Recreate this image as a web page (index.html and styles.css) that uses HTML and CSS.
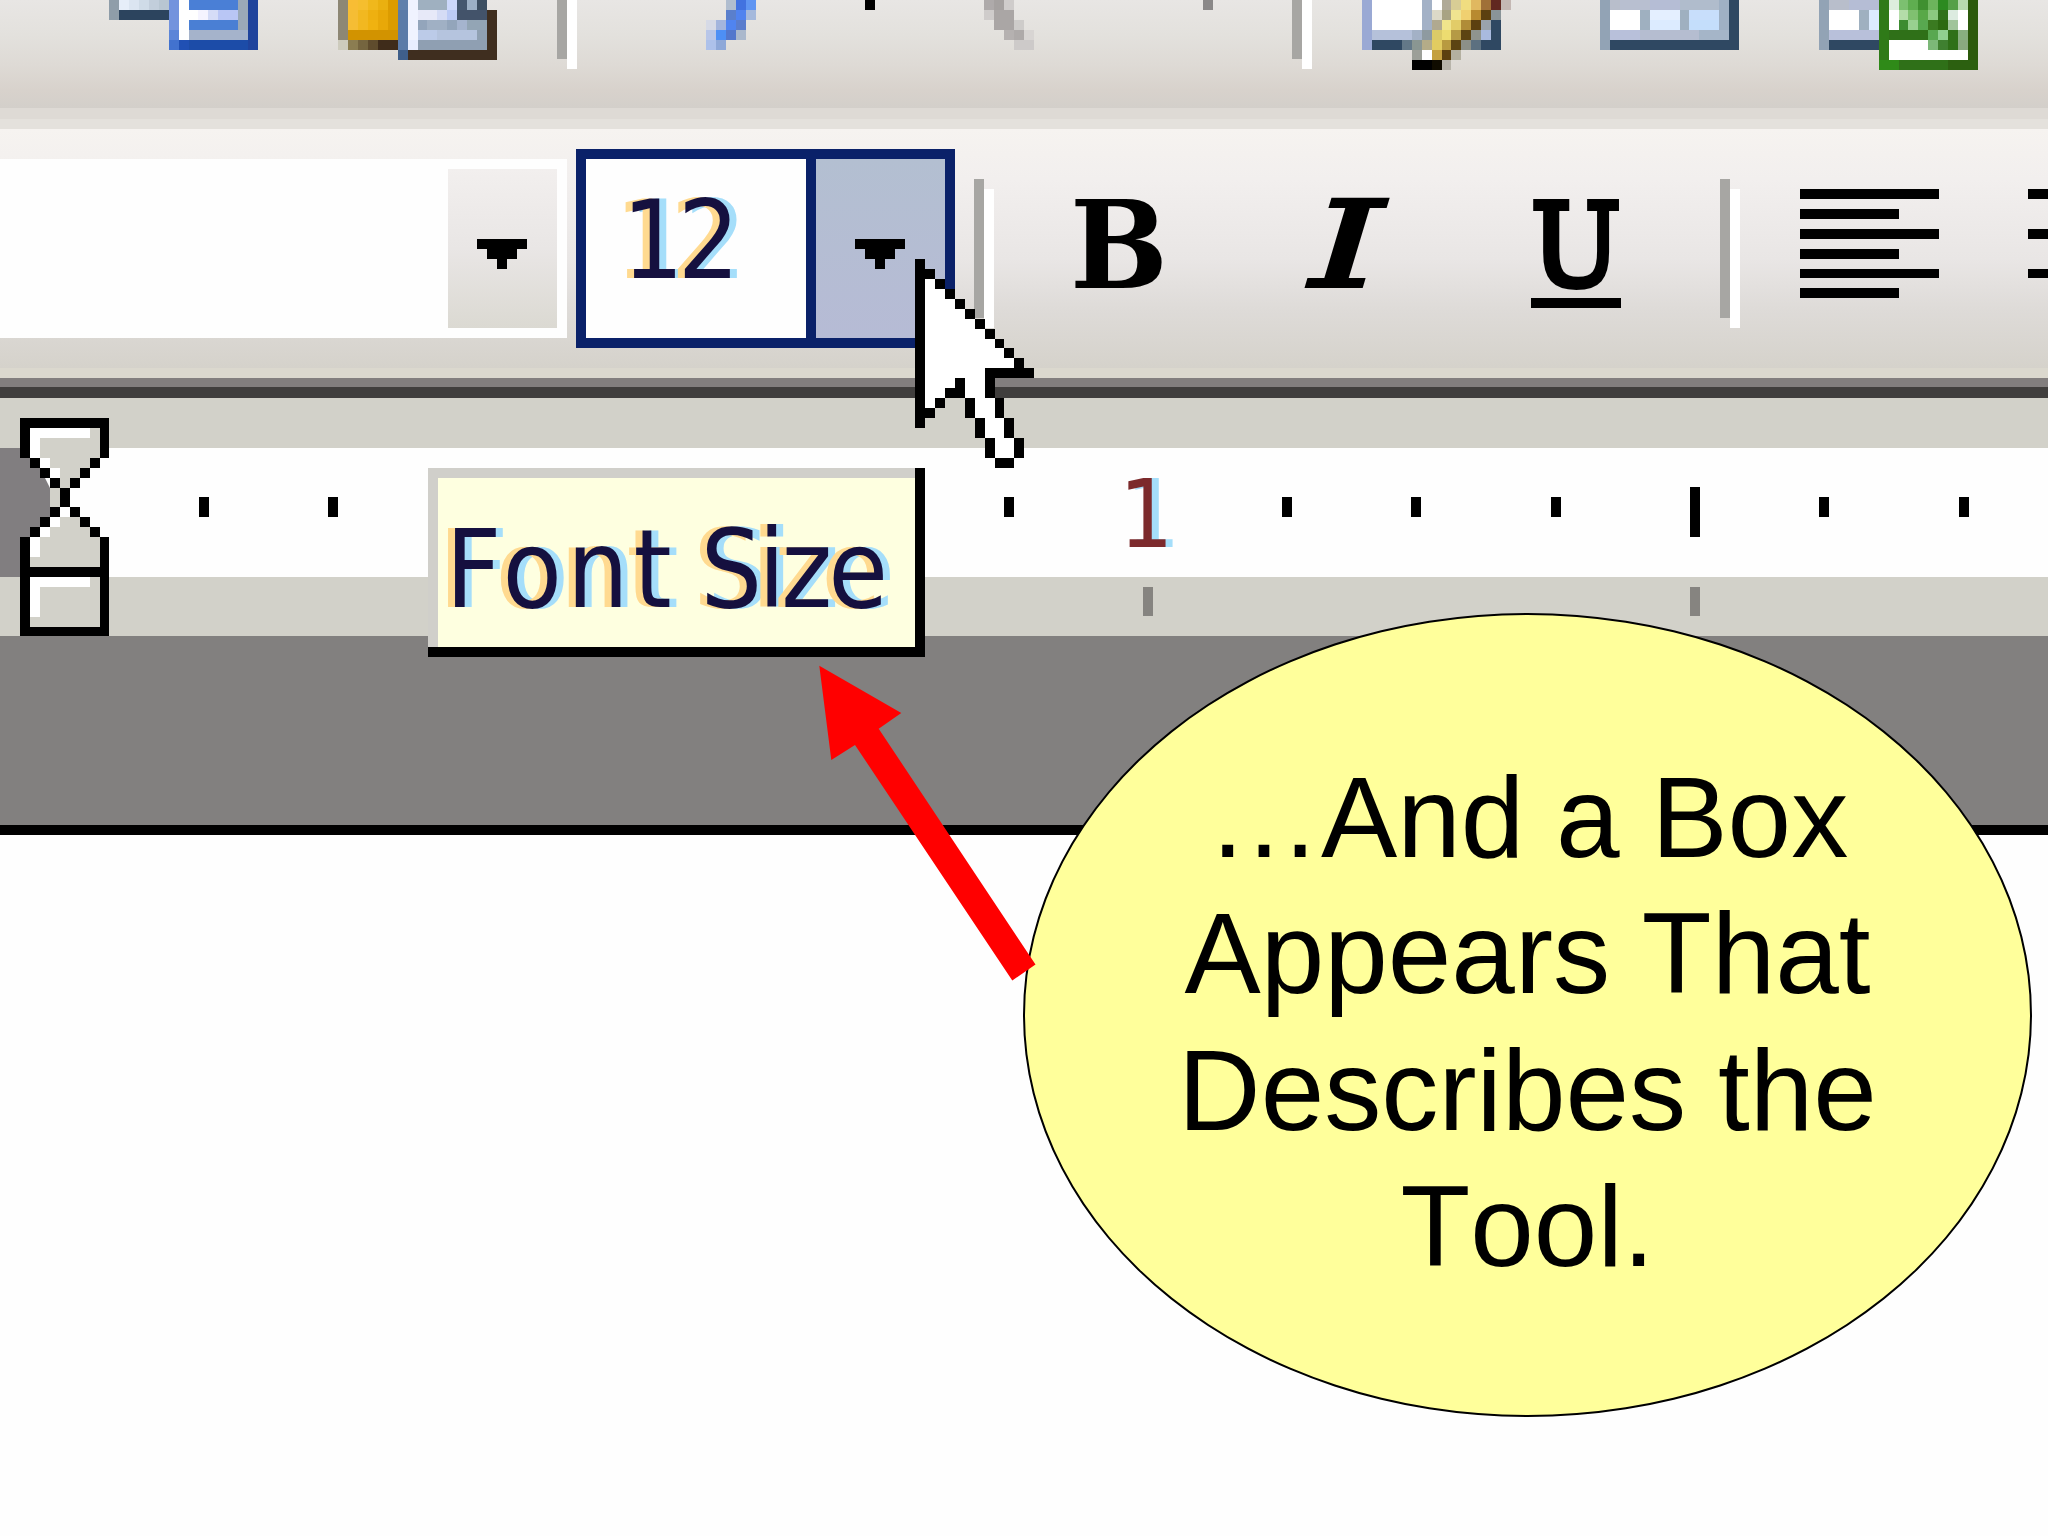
FILE: index.html
```html
<!DOCTYPE html>
<html lang="en">
<head>
    <meta charset="UTF-8">
    <title>Font Size Tool</title>
    <link rel="stylesheet" href="styles.css">
</head>
<body>
    <div class="screen">
        <div class="toolbar standard">
            <svg class="icon copy" data-icon="copy"></svg>
            <svg class="icon paste" data-icon="paste"></svg>
            <div class="separator sep-a"></div>
            <svg class="icon undo" data-icon="undo"></svg>
            <div class="dot dot-undo"></div>
            <svg class="icon redo" data-icon="redo"></svg>
            <div class="dot dot-redo"></div>
            <div class="separator sep-b"></div>
            <svg class="icon draw" data-icon="draw"></svg>
            <svg class="icon table" data-icon="table"></svg>
            <svg class="icon excel" data-icon="excel"></svg>
        </div>

        <div class="toolbar formatting">
            <div class="font-combo">
                <div class="drop"><svg data-icon="down"></svg></div>
            </div>
            <div class="size-combo">
                <div class="size-value"><span class="label">12</span></div>
                <div class="size-drop"><svg data-icon="down"></svg></div>
            </div>
            <div class="separator sep-c"></div>
            <svg class="style-btn bold" width="110" height="150"><text x="6" y="99" textLength="98" lengthAdjust="spacingAndGlyphs">B</text></svg>
            <svg class="style-btn italic" width="110" height="150"><text x="19" y="97" textLength="72" lengthAdjust="spacingAndGlyphs">I</text></svg>
            <svg class="style-btn underline" width="110" height="150">
                <text x="10" y="96" textLength="90" lengthAdjust="spacingAndGlyphs">U</text>
                <rect x="10" y="109" width="90" height="10"/>
            </svg>
            <div class="separator sep-d"></div>
            <svg class="align" data-icon="left"></svg>
            <svg class="center" data-icon="center"></svg>
        </div>

        <div class="ruler">
            <div class="margin-area"></div>
            <svg class="scale" width="2048" height="129">
                <path d="M199 49h10v20h-10zM328 49h10v20h-10zM1004 49h10v20h-10zM1282 49h10v20h-10zM1411 49h10v20h-10zM1551 49h10v20h-10zM1690 39h10v50h-10zM1819 49h10v20h-10zM1959 49h10v20h-10z"/>
            </svg>
            <span class="number">1</span>
        </div>
        <div class="tab-strip">
            <div class="tab-mark first"></div>
            <div class="tab-mark second"></div>
        </div>
        <div class="desk"></div>
        <div class="page"></div>

        <svg class="indent" data-icon="indent"></svg>
        <div class="tooltip"><span class="label"><span class="wide">Font</span> <span class="tight">Size</span></span></div>
        <svg class="cursor" data-icon="cursor"></svg>

        <div class="callout">
            <p>…And a Box<br>Appears That<br>Describes the<br>Tool.</p>
        </div>
        <svg class="arrow" width="220" height="320">
            <polygon points="2.3,2.7 84.3,50 61.7,65.7 218.5,301.5 195.3,317.5 38,82 14.3,97"/>
        </svg>
    </div>

    <script src="icons.js"></script>
</body>
</html>
```
FILE: styles.css
```css
* {
    margin: 0;
    padding: 0;
    box-sizing: border-box;
}

body {
    background: #fefefe;
    font-family: "Liberation Sans", Arial, sans-serif;
}

svg {
    display: block;
    flex: none;
}

.screen {
    position: relative;
    width: 2048px;
    height: 1536px;
    overflow: hidden;
}

.toolbar {
    display: flex;
    align-items: flex-start;
    overflow: hidden;
}

.standard {
    height: 129px;
    background: linear-gradient(#e8e6e4 0, #e3e1dd 35px, #dedad5 65px, #d8d2cc 90px, #d3cfca 108px, #dedad5 108px, #dedad5 119px, #e4e1dc 119px);
}

.formatting {
    height: 249px;
    background: linear-gradient(#f6f3f0 0, #f2efee 50px, #e9e6e5 130px, #dedbd8 180px, #d5d2cb 239px, #dbd8ce 239px);
}

/* standard toolbar spacing */
.copy { margin-left: 109px; }
.paste { margin-left: 80px; }
.sep-a { margin-left: 60px; }
.undo { margin-left: 129px; }
.dot-undo { margin-left: 109px; background: #000; }
.redo { margin-left: 109px; }
.dot-redo { margin-left: 169px; background: #8a8888; }
.sep-b { margin-left: 79px; }
.draw { margin-left: 50.5px; }
.table { margin-left: 89px; }
.excel { margin-left: 79.5px; }

.dot {
    flex: none;
    width: 10px;
    height: 10px;
}

.separator {
    flex: none;
    width: 20px;
    height: 149px;
    background: linear-gradient(#a7a6a3, #a7a6a3) 0 0 / 10px 139px no-repeat,
                linear-gradient(#fff, #fff) 10px 10px / 10px 139px no-repeat;
}

.standard .separator {
    margin-top: -80px;
}

.formatting .separator {
    margin-top: 50px;
}

/* combo boxes */
.font-combo {
    flex: none;
    display: flex;
    justify-content: flex-end;
    width: 567px;
    height: 179px;
    margin-top: 30px;
    padding: 10px;
    background: #fefefe;
}

.drop {
    width: 109px;
    height: 159px;
    padding: 70px 0 0 29px;
    background: linear-gradient(#f2efee, #e9e6e5 50%, #dbd9d2);
}

.size-combo {
    flex: none;
    display: flex;
    width: 379px;
    height: 199px;
    margin: 20px 0 0 9px;
    border: 10px solid #0a2169;
}

.size-value {
    width: 230px;
    padding: 28px 0 0 36px;
    background: #fefefe;
    border-right: 10px solid #0a2169;
}

.size-drop {
    flex: 1;
    padding: 80px 0 0 39px;
    background: linear-gradient(#b3bfd1, #b6bbd5);
}

.label {
    display: block;
    font-family: "DejaVu Sans Condensed", "DejaVu Sans", sans-serif;
    font-stretch: condensed;
    font-size: 108px;
    line-height: 108px;
    white-space: nowrap;
    color: #15103f;
    text-shadow: -7px 0 0 #ffda90, 7px 0 0 #a5defa;
}

.size-value .label {
    letter-spacing: -6px;
}

.tooltip .label {
    word-spacing: -7px;
}

.wide {
    letter-spacing: 5px;
}

.tight {
    letter-spacing: -4px;
}

.sep-c { margin-left: 19px; }
.sep-d { margin-left: 89px; }

.style-btn {
    margin-top: 60px;
    overflow: visible;
    font-family: "DejaVu Serif", "Liberation Serif", serif;
    font-size: 114px;
    stroke: #000;
    stroke-width: 6px;
}

.style-btn rect {
    stroke: none;
}

.bold {
    margin-left: 70px;
    font-size: 122px;
    font-weight: bold;
    stroke: none;
}

.italic {
    margin-left: 118px;
    font-size: 117px;
    font-style: italic;
    stroke-width: 4px;
}

.underline { margin-left: 119px; }

.align { margin: 60px 0 0 60px; }
.center { margin: 60px 0 0 89px; }

/* ruler */
.ruler {
    position: relative;
    height: 199px;
    border-top: 9px solid #827e7e;
    background: linear-gradient(#403e3d 11px, #d2d1c9 11px, #d2d1c9 61px, #fefefe 61px);
}

.margin-area {
    position: absolute;
    left: 0;
    bottom: 0;
    width: 50px;
    height: 129px;
    background: #817e80;
    clip-path: polygon(0 0, 30px 0, 50px 40px, 50px 70px, 30px 90px, 30px 129px, 0 129px);
}

.scale {
    position: absolute;
    left: 0;
    bottom: 0;
}

.number {
    position: absolute;
    left: 1119px;
    top: 80px;
    font-family: "DejaVu Sans Condensed", "DejaVu Sans", sans-serif;
    font-stretch: condensed;
    font-size: 95px;
    line-height: 95px;
    color: #7c2a2c;
    text-shadow: 7px 0 0 #a5defa;
}

.tab-strip {
    display: flex;
    height: 59px;
    padding-top: 10px;
    background: #d2d1c9;
}

.tab-mark {
    width: 10px;
    height: 29px;
    background: #868480;
}

.first { margin-left: 1143px; }
.second { margin-left: 537px; }

.desk {
    height: 199px;
    background: #82807f;
    border-bottom: 10px solid #000;
}

.page {
    height: 701px;
    background: #fefefe;
}

/* floating pieces */
.indent {
    position: absolute;
    left: 20px;
    top: 417.5px;
}

.tooltip {
    position: absolute;
    left: 427.5px;
    top: 467.5px;
    width: 497px;
    height: 189px;
    padding: 48px 0 0 18px;
    background: #feffe0;
    box-shadow: inset -10px -10px 0 #000, inset 10px 10px 0 #d0cfca;
}

.cursor {
    position: absolute;
    left: 915px;
    top: 259px;
}

.callout {
    position: absolute;
    left: 1023px;
    top: 613px;
    width: 1009px;
    height: 804px;
    padding-top: 135px;
    border: 2px solid #000;
    border-radius: 50%;
    background: #ffff9b;
    text-align: center;
    font-size: 114.3px;
    line-height: 136.4px;
    font-kerning: none;
}

.arrow {
    position: absolute;
    left: 817px;
    top: 663px;
    fill: #ff0000;
}
```
FILE: icons.js
```js
// one entry per row, "color*count" for runs, "-" for an empty cell
const CELL = 9.94;

const names = { K: '#000', W: '#fff', g: '#d2d1c9', n: '#2f4862', b: '#3f2e1f', e: '#2f7a18' };

const icons = {
    copy: [
        '8f9da9 e6eef9 dbe5f1 cfdbe7 c2cedb b8c6d2 7393dd W 4a7fd6*5 9aa9b8 1f439c',
        '8f9da9 2c445e*5 7393dd W W f5f4ff d5dcf7 b9c6f5*2 9aa9b8 1f439c',
        '- - - - - - 7393dd W 4a7fd4*5 9aa9b8 1f439c',
        '- - - - - - 5b85d8 W a5b3cb*6 1f439c',
        '- - - - - - 4272cf 2050b4 1c4ca8*6 1f439c'
    ],
    paste: [
        '8d8775 f8bd34 f5be2e f0b81c eab010 dc9c00 6080ac f0f3ff 9fb0c0*3 ccd8fb 44576f 9cb0c6 3d4f62',
        '8d8775 f5bd34 f2b820 eeb010 e8a808 dc9c00 5b7ba8 f0f3ff e7e9f8*2 d5dcf5 bccbf5 43536a*3 b',
        '8d8775 f5bd34 f2b820 f0b210 e8a808 dc9c00 5b7ba8 f0f3ff 93a5bb a0b0c4*2 93a5bb a5b4ce 93a5b5*2 b',
        '8d8775 d29300*5 5b7ba8 f0f3ff bccbe8*2 b5c4de*4 8fa0b2 b',
        'cdcbbd 8b7d51 75653f 5f4c2d 3f2c1a*2 5b7ba8 e8eeff 8f9fb2*7 b',
        '- - - - - - 3f5f8a b*9'
    ],
    undo: [
        '- - b0bdcf 4272e0 6095f2',
        '- - 5a7fcc 5183ef a5b9dc',
        'd6dae6 a3b5dd 5084f0 5a7dcd -',
        'b8c6e8 4d8ff5 5377cc aab8cc -',
        'adc1ea 8ea8d8 - - -'
    ],
    redo: [
        'aeaaaa a5a1a0 cfcccb - -',
        'cfcccb aaa6a5*2 - -',
        '- aaa6a5*2 ceccca -',
        '- - b5b1b0 aeaaa9 d8d5d3',
        '- - - cdcac9*2'
    ],
    draw: [
        '9aa9d4 W*5 a3b1c6 W b0aa98 d8cd95 f0dd80 e0b860 a07038 612820 c4b8b4',
        '9aa9d4 W*5 a3b1c6 dcd9c8 a8a383 f0e490 f0d070 b88a30 5c4010 8a9498 -',
        '9aa9d4 W*5 a3b1c6 b0a990 f0e48c e2cc68 b08c38 5c4010 9aa3ac n -',
        '9aa9d4 b5c1da*4 a3b1c6 8e9aa0 dccb68 eddc70 b59a45 5c4412 8f948e a9badf n -',
        '9aa9d4 n*3 637888 8a9692 b4ac88 e2cc60 b89a40 5c4412 8c9088 5c7080 n*2 -',
        '- - - - - 9c9f98 W c4a040 5c4010 b4b0a0',
        '- - - - - K*2 100c00 b8b4aa'
    ],
    table: [
        '92a3b5 b8becb b8bfd0*3 b5bdd5*3 b0bccc*4 9fb0c4 n',
        '92a3b5 W*3 9fb0c0 e4efff*3 9fb0c0 c8defb*3 9fb0c4 n',
        '92a3b5 W*3 9fb0c0 dcebff*3 9fb0c0 c4defb*3 9fb0c4 n',
        '92a3b5 b8c0da*3 b5bdd0*6 a5b5c8*3 n',
        '92a3b5 n*13'
    ],
    excel: [
        '92a3b5 b8becb*2 b5bdd5*3 e ddeedd 7cc070 5fae50 3f9030 6cb45c 2c8a20 55a048 b8dab0 2c5a0c',
        '92a3b5 W*3 9fb0c0 dcebff e W b4dca8 80c070 58a848 8cc880 30701c dcebe0 W 2c5a0c',
        '92a3b5 W*3 9fb0c0 dcebff e W 3c8c30 98d090 58a850 3a7a20 2c6a10 a0c49a W 2c5a0c',
        '92a3b5 b8c0da*5 e 2f7018*4 58a850 90d090 2f7018 88b080 2c5a0c',
        '92a3b5 n*5 e W*4 7cb878 3f8030 2f7018 8aa880 2c5a0c',
        '- - - - - - e W*8 2c5a0c',
        '- - - - - - 2f8a18*2 2f7018*5 2c6010*3'
    ],
    down: [
        'K*5',
        '- K*3 -',
        '- - K - -'
    ],
    left: ['K*14', '-', 'K*10', '-', 'K*14', '-', 'K*10', '-', 'K*14', '-', 'K*10'],
    center: ['K*2', '-', '-', '-', 'K*2', '-', '-', '-', 'K*2'],
    indent: [
        'K*9',
        'K W*6 g K',
        'K W g*6 K',
        'K W g*6 K',
        '- K W g*4 K -',
        '- - K W g*2 K - -',
        '- - - K g K',
        '- - - g K W',
        '- - - g K W',
        '- - - K W K',
        '- - K W g*2 K',
        '- K W g*4 K',
        'K W g*6 K',
        'K W g*6 K',
        'K g*7 K',
        'K*9',
        'K W*6 g K',
        'K W g*6 K',
        'K W g*6 K',
        'K W g*6 K',
        'K g*7 K',
        'K*9'
    ],
    cursor: [
        'K',
        'K K',
        'K W K',
        'K W*2 K',
        'K W*3 K',
        'K W*4 K',
        'K W*5 K',
        'K W*6 K',
        'K W*7 K',
        'K W*8 K',
        'K W*9 K',
        'K W*6 K*5',
        'K W*3 K W*2 K',
        'K W*2 K*2 W*2 K',
        'K W K -*2 K W*2 K',
        'K*2 -*3 K W*2 K',
        'K -*5 K W*2 K',
        '-*6 K W*2 K',
        '-*7 K W*2 K',
        '-*7 K W*2 K',
        '-*8 K*2'
    ]
};

document.querySelectorAll('[data-icon]').forEach(svg => {
    const rows = icons[svg.dataset.icon];
    let width = 0;
    let out = '';

    rows.forEach((row, y) => {
        let x = 0;
        row.split(' ').forEach(token => {
            const [key, count] = token.split('*');
            const run = Number(count || 1);
            if (key !== '-') {
                out += `<rect x="${x}" y="${y}" width="${run}" height="1" fill="${names[key] || '#' + key}"/>`;
            }
            x += run;
        });
        width = Math.max(width, x);
    });

    svg.setAttribute('viewBox', `0 0 ${width} ${rows.length}`);
    svg.setAttribute('width', width * CELL);
    svg.setAttribute('height', rows.length * CELL);
    svg.setAttribute('shape-rendering', 'crispEdges');
    svg.innerHTML = out;
});
```
